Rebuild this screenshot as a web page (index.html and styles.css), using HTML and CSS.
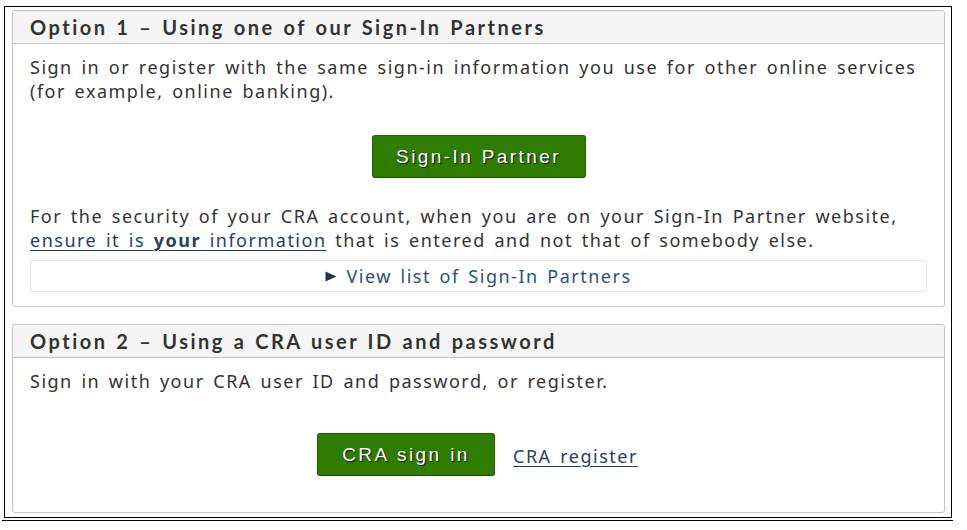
FILE: index.html
```html
<!DOCTYPE html>
<html lang="en">
<head>
<meta charset="utf-8">
<title>Sign in</title>
<link rel="stylesheet" href="styles.css">
</head>
<body>
<div class="frame">
  <section class="panel">
    <h2 class="panel-heading">Option 1 – Using one of our Sign-In Partners</h2>
    <div class="panel-body p1">
      <p class="txt">Sign in or register with the same sign-in information you use for other online services (for example, online banking).</p>
      <div class="btn-row center">
        <a class="btn btn-partner" href="#">Sign-In Partner</a>
      </div>
      <p class="txt sec">For the security of your CRA account, when you are on your Sign-In Partner website, <a class="lnk" href="#">ensure it is <strong>your</strong> information</a> that is entered and not that of somebody else.</p>
      <div class="details"><svg class="tri" width="12" height="11" viewBox="0 0 12 11" aria-hidden="true"><path d="M0.5 0.5 L11.5 5.5 L0.5 10.5 Z" fill="#26374a"/></svg>View list of Sign-In Partners</div>
    </div>
  </section>
  <section class="panel panel2">
    <h2 class="panel-heading">Option 2 – Using a CRA user ID and password</h2>
    <div class="panel-body p2">
      <p class="txt">Sign in with your CRA user ID and password, or register.</p>
      <div class="btn-row cra">
        <a class="btn btn-cra" href="#">CRA sign in</a>
        <a class="lnk reg" href="#">CRA register</a>
      </div>
    </div>
  </section>
</div>
<div class="underline"></div>
</body>
</html>
```
FILE: styles.css
```css
html, body {
  margin: 0;
  padding: 0;
  background: #fff;
}
body {
  width: 967px;
  height: 530px;
  overflow: hidden;
  font-family: "Noto Sans", "Open Sans", sans-serif;
  color: #333;
}
.frame {
  margin: 6px 0 0 4px;
  width: 948px;
  height: 512px;
  border: 1.5px solid #000;
  padding: 3px 6px 0 7px;
  box-sizing: border-box;
}
.underline {
  margin: 2px 0 0 2px;
  width: 951px;
  height: 0;
  border-top: 1.5px solid #000;
}
.panel {
  border: 1px solid #c4c4c4;
  border-radius: 3px;
  background: #fff;
}
.panel2 {
  margin-top: 17px;
}
.panel-heading {
  margin: 0;
  height: 33px;
  box-sizing: border-box;
  padding: 4px 17px 0;
  background: #f5f5f5;
  border-bottom: 1px solid #c4c4c4;
  border-radius: 3px 3px 0 0;
  font-family: Lato, "Open Sans", sans-serif;
  font-weight: 700;
  font-size: 20px;
  line-height: 24px;
  letter-spacing: 2.5px;
  word-spacing: 1.5px;
  color: #333;
}
.panel-body {
  padding: 11px 17px 14px;
}
.txt {
  margin: 0;
  font-size: 18px;
  line-height: 24px;
  letter-spacing: 1.5px;
  word-spacing: 2.5px;
}
.btn-row {
  display: flex;
  align-items: center;
}
.center {
  justify-content: center;
  margin: 32px 0 26px;
}
.cra {
  margin: 40px 0 0 287px;
  gap: 18px;
}
.p2 {
  padding-bottom: 36px;
}
.btn {
  display: flex;
  align-items: center;
  justify-content: center;
  box-sizing: border-box;
  background: #2e7d00;
  border: 1px solid #245f00;
  border-bottom-color: #1d4d00;
  border-radius: 3px;
  color: #fff;
  text-decoration: none;
  font-family: "Liberation Sans", Arial, sans-serif;
  font-size: 19px;
  letter-spacing: 2.4px;
  word-spacing: 1px;
  text-shadow: 1px 1px 1px #111;
  height: 43px;
}
.btn-partner {
  width: 214px;
}
.btn-cra {
  width: 178px;
}
.lnk {
  color: #284162;
  text-decoration: underline;
  text-underline-offset: 3px;
  text-decoration-thickness: 1px;
}
.lnk strong {
  font-weight: 700;
}
.reg {
  font-size: 18px;
  letter-spacing: 1.5px;
  word-spacing: 2.5px;
  margin-top: 2px;
}
.details {
  margin-top: 8px;
  height: 32px;
  box-sizing: border-box;
  border: 1px solid #e3e3e3;
  border-radius: 3px;
  display: flex;
  align-items: center;
  justify-content: center;
  color: #295376;
  font-size: 18px;
  letter-spacing: 1.5px;
  word-spacing: 2.5px;
}
.tri {
  margin-right: 9px;
  flex: none;
}
```
